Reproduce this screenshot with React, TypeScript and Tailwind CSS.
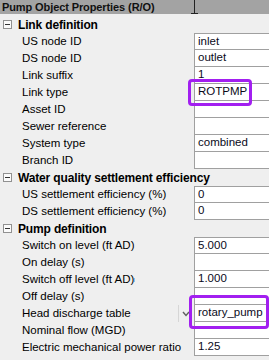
import React from "react";

type Row =
  | { kind: "header"; label: string }
  | { kind: "prop"; label: string; value?: string; first?: boolean; combo?: boolean };

const rows: Row[] = [
  { kind: "header", label: "Link definition" },
  { kind: "prop", label: "US node ID", value: "inlet", first: true },
  { kind: "prop", label: "DS node ID", value: "outlet" },
  { kind: "prop", label: "Link suffix", value: "1" },
  { kind: "prop", label: "Link type", value: "ROTPMP" },
  { kind: "prop", label: "Asset ID", value: "" },
  { kind: "prop", label: "Sewer reference", value: "" },
  { kind: "prop", label: "System type", value: "combined" },
  { kind: "prop", label: "Branch ID", value: "" },
  { kind: "header", label: "Water quality settlement efficiency" },
  { kind: "prop", label: "US settlement efficiency (%)", value: "0", first: true },
  { kind: "prop", label: "DS settlement efficiency (%)", value: "0" },
  { kind: "header", label: "Pump definition" },
  { kind: "prop", label: "Switch on level (ft AD)", value: "5.000", first: true },
  { kind: "prop", label: "On delay (s)", value: "" },
  { kind: "prop", label: "Switch off level (ft AD)", value: "1.000" },
  { kind: "prop", label: "Off delay (s)", value: "" },
  { kind: "prop", label: "Head discharge table", value: "rotary_pump", combo: true },
  { kind: "prop", label: "Nominal flow (MGD)", value: "" },
  { kind: "prop", label: "Electric mechanical power ratio", value: "1.25" },
];

function MinusBox() {
  return (
    <div className="w-[9px] h-[9px] border border-[#919191] bg-[#fbfbfb] flex items-center justify-center shrink-0">
      <div className="w-[5px] h-px bg-[#333]" />
    </div>
  );
}

export default function App() {
  return (
    <div
      className="relative w-[269px] h-[360px] overflow-hidden bg-[#efefef] text-black"
      style={{ fontFamily: '"Liberation Sans", Arial, sans-serif' }}
    >
      {/* title bar */}
      <div className="h-[14px] bg-[#a3a3a3] flex items-center pl-[2px] relative">
        <span className="text-[11px] font-bold leading-none text-[#111] whitespace-nowrap tracking-[-0.1px]">
          Pump Object Properties (R/O)
        </span>
        <div className="absolute left-[194px] top-0 w-px h-[14px] bg-[#222]" />
        <div className="absolute left-[191px] top-[13px] w-[7px] h-px bg-[#222]" />
      </div>
      <div className="h-[2px]" />
      <div className="flex flex-col">
        {rows.map((r, i) =>
          r.kind === "header" ? (
            <div key={i} className="h-[17px] flex items-center">
              <div className="pl-[3px] pr-[6px] flex items-center">
                <MinusBox />
              </div>
              <span className="text-[12px] font-bold leading-none whitespace-nowrap tracking-[-0.15px]">{r.label}</span>
            </div>
          ) : (
            <div key={i} className="h-[17px] flex">
              <div className="w-[194px] shrink-0 flex items-center pl-[22px] relative">
                <span className="text-[11.5px] leading-none whitespace-nowrap">{r.label}</span>
                {r.combo && (
                  <>
                    <div className="absolute left-[178px] top-0 w-px h-[17px] bg-[#d6d6d6]" />
                    <svg
                      className="absolute left-[182px] top-[6px]"
                      width="8"
                      height="6"
                      viewBox="0 0 8 6"
                    >
                      <polyline points="1,1 4,4.5 7,1" fill="none" stroke="#606060" strokeWidth="1.4" />
                    </svg>
                  </>
                )}
              </div>
              <div
                className={`flex-1 bg-white border-l border-b border-[#a0a0a0] flex items-center pl-[3px] ${
                  r.first ? "border-t" : ""
                }`}
              >
                <span className="text-[11.5px] leading-none whitespace-nowrap text-[#0a0a1a]">{r.value}</span>
              </div>
            </div>
          )
        )}
      </div>
      {/* blue tick */}
      <div className="absolute left-[134px] top-[278px] w-px h-[4px] bg-[#7fc4f0]" />
      {/* highlights */}
      <div className="absolute left-[188px] top-[79px] w-[64px] h-[27px] border-[3px] border-[#a21ff0] rounded-[4px]" />
      <div className="absolute left-[189px] top-[295px] w-[80px] h-[34px] border-[3px] border-[#a21ff0] rounded-[4px]" />
    </div>
  );
}
